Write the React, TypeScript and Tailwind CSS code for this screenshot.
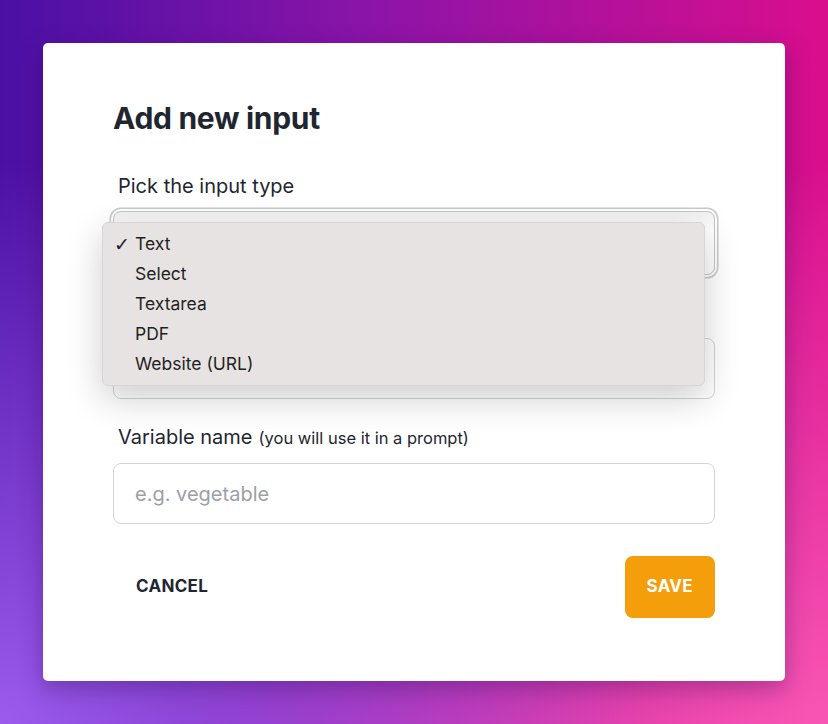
import React from 'react';

const options = ['Text', 'Select', 'Textarea', 'PDF', 'Website (URL)'];

function Field({ label, hint, children }: { label?: string; hint?: string; children: React.ReactNode }) {
  return (
    <div className="flex flex-col">
      {label ? (
        <label className="pl-[5px] mb-[11px] leading-[28px] text-[20px] text-[#1e2630]">
          {label}
          {hint && <span className="text-[16.5px] ml-[6px]">{hint}</span>}
        </label>
      ) : (
        <div className="h-[28px] mb-[11px]" />
      )}
      {children}
    </div>
  );
}

function App() {
  return (
    <div
      className="w-[828px] h-[724px] p-[43px] font-['Inter',sans-serif] bg-[radial-gradient(ellipse_at_0%_100%,rgba(160,95,240,0.95),transparent_55%),radial-gradient(ellipse_at_100%_100%,rgba(250,90,182,0.95),transparent_55%),linear-gradient(to_right,#4a10a5,#8c14a8_45%,#da0e8d)]"
    >
      <div className="h-full bg-white rounded-[5px] shadow-[0_8px_24px_rgba(40,10,80,0.35)] px-[70px] pt-[57px] pb-[64px] flex flex-col">
        <h1 className="text-[30px] leading-[36px] font-bold tracking-[-0.3px] text-[#1e2630] mb-[36px]">Add new input</h1>

        <div className="flex flex-col gap-[24px]">
          <Field label="Pick the input type">
            <div className="relative">
              <div className="h-[64px] rounded-[8px] border border-[#c4c4c4] bg-[linear-gradient(to_bottom,#f0f0f0,#ffffff_30%)] shadow-[0_0_0_2px_#ffffff,0_0_0_3.5px_#c9c9c9]" />
              {/* open menu of the select */}
              <div className="absolute left-[-11px] right-[10px] top-[11px] z-10 py-[6px] rounded-[6px] bg-[#e8e3e3] border border-[#dad5d5] shadow-[0_12px_36px_rgba(0,0,0,0.2)]">
                {options.map((o, i) => (
                  <div key={o} className="h-[30px] flex items-center text-[17.5px] text-[#1f1f22]">
                    <span className="w-[32px] pl-[11px] text-[19px] font-bold font-['DejaVu_Sans',sans-serif]">{i === 0 ? '✓' : ''}</span>
                    <span>{o}</span>
                  </div>
                ))}
              </div>
            </div>
          </Field>

          <Field>
            <div className="h-[61px] rounded-[8px] border border-[#d4d4d4]" />
          </Field>

          <Field label="Variable name" hint="(you will use it in a prompt)">
            <input
              placeholder="e.g. vegetable"
              className="h-[61px] rounded-[8px] border border-[#d4d4d4] px-[21px] text-[20px] placeholder:text-[#9ca0a6] outline-none"
            />
          </Field>
        </div>

        <div className="flex items-center justify-between mt-[32px]">
          <button className="px-[23px] h-[62px] text-[17px] font-bold text-[#1e2630] tracking-[0.3px]">CANCEL</button>
          <button className="px-[22px] h-[62px] rounded-[8px] bg-[#f59e0b] text-white text-[17px] font-bold tracking-[0.3px]">SAVE</button>
        </div>
      </div>
    </div>
  );
}

export default App;
